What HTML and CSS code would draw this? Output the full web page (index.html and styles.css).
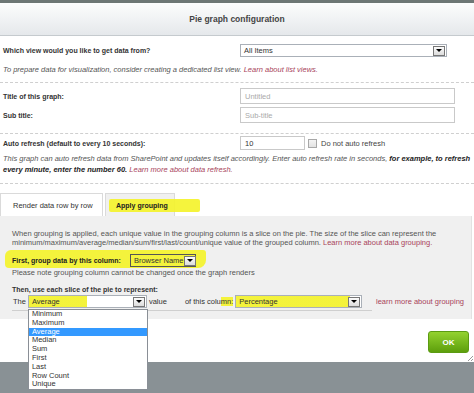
FILE: index.html
```html
<!DOCTYPE html>
<html lang="en">
<head>
    <meta charset="UTF-8">
    <meta name="viewport" content="width=device-width, initial-scale=1.0">
    <title>Pie graph configuration</title>
    <link rel="stylesheet" href="styles.css">
</head>
<body>
    <div class="topbar"></div>
    <div class="dialog">
        <div class="header">Pie graph configuration</div>

        <div class="content">
            <div class="field first">
                <label>Which view would you like to get data from?</label>
                <div class="select wide"><span>All Items</span><span class="arrow"></span></div>
            </div>
            <p class="hint">To prepare data for visualization, consider creating a dedicated list view. <a>Learn about list views.</a></p>
            <div class="sep"></div>

            <div class="field title-row">
                <label>Title of this graph:</label>
                <div class="input">Untitled</div>
            </div>
            <div class="field sub-row">
                <label>Sub title:</label>
                <div class="input">Sub-title</div>
            </div>
            <div class="sep sep-2"></div>

            <div class="field refresh-row">
                <label>Auto refresh (default to every 10 seconds):</label>
                <div class="refresh">
                    <div class="input small">10</div>
                    <span class="checkbox"></span>
                    <span class="check-label">Do not auto refresh</span>
                </div>
            </div>
            <p class="hint two">This graph can auto refresh data from SharePoint and updates itself accordingly. Enter auto refresh rate in seconds, <b>for example, to refresh</b><br><b>every minute, enter the number 60.</b> <a>Learn more about data refresh.</a></p>
            <div class="sep sep-3"></div>

            <div class="tabs">
                <div class="tab">Render data row by row</div>
                <div class="tab current"><span class="hl tab-hl">Apply grouping</span></div>
            </div>

            <div class="panel">
                <p class="para">When grouping is applied, each unique value in the grouping column is a slice on the pie. The size of the slice can represent the<br>minimum/maximum/average/median/sum/first/last/count/unique value of the grouped column. <a>Learn more about data grouping.</a></p>

                <div class="hl group-row">
                    <b>First, group data by this column:</b>
                    <div class="select bare browser"><span>Browser Name</span><span class="arrow"></span></div>
                </div>
                <p class="para">Please note grouping column cannot be changed once the graph renders</p>

                <p class="para then"><b>Then, use each slice of the pie to represent:</b></p>
                <div class="represent-row">
                    <div class="represent">
                        <span>The</span>
                        <div class="select avg">
                            <span>Average</span><span class="arrow"></span>
                            <ul class="options">
                                <li>Minimum</li>
                                <li>Maximum</li>
                                <li class="picked">Average</li>
                                <li>Median</li>
                                <li>Sum</li>
                                <li>First</li>
                                <li>Last</li>
                                <li>Row Count</li>
                                <li>Unique</li>
                            </ul>
                        </div>
                        <span class="value">value</span>
                        <span class="of">of this colu<span class="hl">mn:</span></span>
                        <div class="select pct"><span>Percentage</span><span class="arrow"></span></div>
                    </div>
                    <a class="learn">learn more about grouping</a>
                </div>
            </div>

            <div class="footer">
                <button class="ok">OK</button>
                <span class="grip"></span>
            </div>
        </div>
    </div>
</body>
</html>
```

FILE: styles.css
```css
body {
    margin: 0;
    width: 474px;
    height: 393px;
    overflow: hidden;
    background-color: #899195;
    font-family: "Liberation Sans", Arial, sans-serif;
    font-size: 7.5px;
    color: #333;
}
p {
    margin: 0;
}
a {
    color: #a8435a;
}
.topbar {
    height: 3px;
    background-color: #6d7775;
}
.dialog {
    background-color: #fff;
}
.header {
    height: 32px;
    border-bottom: 1px solid #c5cace;
    background: linear-gradient(#fcfdfd, #e5e8eb);
    display: flex;
    align-items: center;
    justify-content: center;
    font-size: 8.5px;
    font-weight: bold;
    color: #444;
}
.content {
    padding-top: 8px;
}
.field {
    display: grid;
    grid-template-columns: 237px 1fr;
    align-items: center;
    padding-left: 3px;
}
.field label {
    font-size: 7px;
    font-weight: bold;
    color: #333;
}
.title-row {
    margin-top: 5px;
}
.sub-row {
    margin-top: 3px;
}
.refresh-row {
    margin-top: 2px;
}
.select {
    box-sizing: border-box;
    height: 13px;
    border: 1px solid #aab0b8;
    background-color: #fff;
    display: flex;
    align-items: center;
    justify-content: space-between;
    padding-left: 3px;
    color: #333;
    white-space: nowrap;
}
.select.wide {
    width: 207px;
}
.arrow {
    box-sizing: border-box;
    flex: none;
    width: 12px;
    height: 10px;
    margin-right: 1px;
    border: 1px solid #777;
    background: linear-gradient(#fbfbfb, #dcdcdc);
    display: flex;
    align-items: center;
    justify-content: center;
}
.arrow::after {
    content: "";
    border-left: 3px solid transparent;
    border-right: 3px solid transparent;
    border-top: 3px solid #000;
}
.input {
    box-sizing: border-box;
    width: 215px;
    height: 16px;
    border: 1px solid #c9c9c9;
    padding-left: 4px;
    display: flex;
    align-items: center;
    color: #aaa;
}
.input.small {
    width: 65px;
    height: 14px;
    color: #333;
}
.refresh {
    display: flex;
    align-items: center;
}
.checkbox {
    box-sizing: border-box;
    width: 9px;
    height: 9px;
    margin-left: 3px;
    border: 1px solid #a8a8a8;
    background: linear-gradient(#f4f4f4, #e2e2e2);
}
.check-label {
    margin-left: 4px;
    color: #444;
}
.hint {
    margin: 7px 0 0 3px;
    line-height: 11px;
    font-style: italic;
    color: #555;
}
.hint.two {
    margin-top: 3px;
}
.hint b {
    color: #222;
}
.sep {
    margin-top: 7px;
    border-top: 1px dashed #cfcfcf;
}
.sep-2 {
    margin-top: 10px;
}
.sep-3 {
    margin-top: 8px;
}
.tabs {
    margin-top: 9px;
    display: flex;
    align-items: flex-end;
}
.tab {
    box-sizing: border-box;
    width: 103px;
    height: 23px;
    border: 1px solid #dadada;
    border-bottom: none;
    background-color: #fff;
    display: flex;
    align-items: center;
    padding-left: 12px;
    color: #333;
}
.tab.current {
    width: 70px;
    margin-left: 2px;
    padding-left: 3px;
    background-color: #f0f0f0;
}
.hl {
    background-color: rgba(244, 243, 40, 0.9);
}
.tab-hl {
    padding: 3px 32px 3px 7px;
    border-radius: 2px;
    font-size: 7px;
    font-weight: bold;
    color: #222;
    white-space: nowrap;
}
.panel {
    box-sizing: border-box;
    width: 472px;
    height: 103px;
    padding: 13px 0 0 12px;
    background-color: #f0f0f0;
    border-right: 1px solid #e2e2e2;
}
.para {
    line-height: 9px;
    color: #555;
}
.group-row {
    box-sizing: border-box;
    display: inline-flex;
    align-items: center;
    height: 18px;
    margin: 3px 0 0 -7px;
    padding: 4px 10px 1px 7px;
    border-radius: 6px 3px 8px 4px;
}
.group-row b {
    font-size: 7px;
    color: #222;
}
.select.bare {
    background: transparent;
    border-color: #555;
}
.select.browser {
    width: 66px;
    margin-left: 9px;
}
.then {
    margin-top: 8px;
}
.then b {
    font-size: 7px;
    color: #333;
}
.represent-row {
    display: flex;
    align-items: flex-start;
    margin-top: 1px;
}
.represent {
    box-sizing: border-box;
    width: 360px;
    display: flex;
    align-items: center;
    padding: 0 0 2px 1px;
    border-bottom: 1px solid #cfcfcf;
}
.select.avg {
    position: relative;
    width: 119px;
    margin-left: 2px;
    background: linear-gradient(to right, rgba(244, 243, 40, 0.9) 58px, #fff 58px);
}
.select.pct {
    width: 127px;
    margin-left: 2px;
    background: linear-gradient(to right, rgba(244, 243, 40, 0.9) 114px, #fff 114px);
}
.value {
    margin-left: 2px;
}
.of {
    margin-left: 18px;
}
.learn {
    margin: 2px 0 0 4px;
    white-space: nowrap;
}
.options {
    position: absolute;
    top: 13px;
    left: -1px;
    width: 118px;
    margin: 0;
    padding: 0;
    list-style: none;
    background-color: #fff;
    border: 1px solid #8a8f96;
    z-index: 2;
}
.options li {
    height: 8.8px;
    line-height: 8.8px;
    padding-left: 3px;
    color: #333;
}
.options li.picked {
    background-color: #3399ff;
    color: #fff;
}
.footer {
    position: relative;
    display: flex;
    justify-content: flex-end;
    padding: 12px 5px 9px 0;
}
.ok {
    width: 41px;
    height: 22px;
    border: 1px solid #5b9b12;
    border-radius: 3px;
    background: linear-gradient(#93d22f, #5d9f0c);
    color: #fff;
    font-family: "Liberation Sans", Arial, sans-serif;
    font-size: 8px;
    font-weight: bold;
    padding: 0;
}
.grip {
    position: absolute;
    right: 1px;
    bottom: 1px;
    width: 5px;
    height: 5px;
    background: linear-gradient(135deg, transparent 45%, #999 45%, #999 55%, transparent 55%, transparent 75%, #999 75%, #999 85%, transparent 85%);
}
```
